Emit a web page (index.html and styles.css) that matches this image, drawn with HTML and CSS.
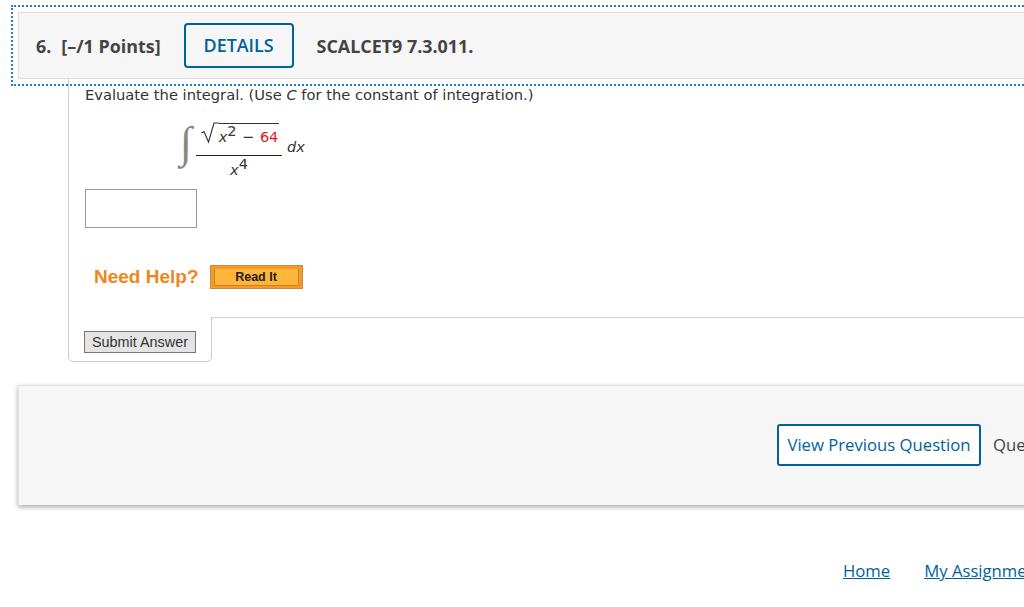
FILE: index.html
```html
<!DOCTYPE html>
<html lang="en">
<head>
  <meta charset="UTF-8" />
  <title>Question 6</title>
  <link rel="stylesheet" href="styles.css">
</head>
<body>
  <div class="page">
    <div class="question-head">
      <span class="q-number">6.</span>
      <span class="q-points">[–/1 Points]</span>
      <a class="details-btn">DETAILS</a>
      <span class="q-ref">SCALCET9 7.3.011.</span>
    </div>

    <div class="question-body">
      <div class="question-main">
        <p class="prompt">Evaluate the integral. (Use <i>C</i> for the constant of integration.)</p>

        <div class="math">
          <span class="integral">∫</span>
          <div class="fraction">
            <div class="numerator">
              <svg class="radical" width="18" height="22" viewBox="0 0 18 22"><path d="M0.5 11 L3 9.5 L7.5 20 L13 1 L18 1" fill="none" stroke="#333" stroke-width="1.1"/></svg>
              <span class="radicand"><i>x</i><sup>2</sup> <span class="minus">−</span> <span class="red">64</span></span>
            </div>
            <div class="denominator"><i>x</i><sup>4</sup></div>
          </div>
          <span class="dx"><i>dx</i></span>
        </div>

        <input class="answer" type="text">

        <div class="help">
          <span class="help-label">Need Help?</span>
          <span class="read-it"><span class="read-it-inner">Read It</span></span>
        </div>
      </div>

      <div class="question-foot">
        <div class="submit-cell"><button class="submit-btn">Submit Answer</button></div>
        <div class="foot-rest"></div>
      </div>
    </div>

    <div class="nav-panel">
      <a class="prev-btn">View Previous Question</a>
      <span class="nav-label">Question 6 of 8</span>
    </div>

    <div class="footer-links">
      <a>Home</a>
      <a>My Assignments</a>
    </div>
  </div>
</body>
</html>
```

FILE: styles.css
```css
html, body {
  margin: 0;
  height: 607px;
  overflow: hidden;
  background: white;
}
.page {
  width: 1400px;
  padding-top: 12px;
  font-family: "DejaVu Sans", sans-serif;
  color: #333;
}
.question-head {
  display: flex;
  align-items: center;
  box-sizing: border-box;
  height: 67px;
  margin-left: 18px;
  padding-left: 17px;
  background-color: #f6f6f6;
  border: 1px solid #ddd;
  outline: 2px dotted #1f7fc4;
  outline-offset: 5px;
  font-family: "Open Sans", sans-serif;
  font-size: 17.9px;
  font-weight: 700;
  color: #444;
}
.q-number {
  margin-right: 10px;
}
.details-btn {
  box-sizing: border-box;
  width: 110px;
  height: 45px;
  margin-left: 23px;
  margin-right: 23px;
  border: 2px solid #00629b;
  border-radius: 4px;
  color: #00629b;
  font-weight: 600;
  line-height: 41px;
  text-align: center;
}
.question-body {
  margin-left: 68px;
}
.question-main {
  padding: 7px 0 28px 16px;
  border-left: 1px solid #ccc;
}
.prompt {
  margin: 0;
  font-size: 14.7px;
  line-height: 18px;
}
.math {
  display: flex;
  align-items: center;
  height: 70px;
  margin-top: 14px;
  margin-left: 92px;
  font-size: 14.5px;
}
.integral {
  width: 16px;
  margin-top: -20px;
  margin-left: 3px;
  font-family: "Liberation Serif", serif;
  font-size: 44px;
  font-style: italic;
  line-height: 44px;
  color: #888;
}
.fraction {
  width: 86px;
  text-align: center;
}
.numerator {
  display: flex;
  justify-content: center;
  align-items: flex-end;
  box-sizing: border-box;
  height: 32px;
  padding-left: 2px;
  border-bottom: 1px solid #222;
}
.radical {
  margin-bottom: 11px;
}
.radicand {
  box-sizing: border-box;
  height: 22px;
  margin-bottom: 10px;
  padding-right: 1px;
  border-top: 1px solid #333;
  line-height: 26px;
  white-space: nowrap;
}
.minus {
  margin: 0 1px;
}
.red {
  color: #e8141c;
}
sup {
  font-size: 14.5px;
  line-height: 0;
  vertical-align: 6px;
}
.denominator {
  height: 27px;
  line-height: 29px;
}
.dx {
  margin-left: 5px;
  margin-top: -12px;
}
.answer {
  display: block;
  box-sizing: border-box;
  width: 112px;
  height: 39px;
  margin: 1px 0 0;
  border: 1px solid #999;
  background: white;
}
.help {
  display: flex;
  align-items: center;
  margin-top: 37px;
  margin-left: 9px;
}
.help-label {
  font-family: "Liberation Sans", sans-serif;
  font-size: 19px;
  font-weight: 700;
  color: #f0861a;
}
.read-it {
  box-sizing: border-box;
  width: 93px;
  height: 24px;
  margin-left: 11px;
  padding: 3px;
  background: #f39a2b;
  border: 1px solid #cf8a3f;
}
.read-it-inner {
  display: block;
  height: 16px;
  background: #ffb43a;
  border: 1px solid #c9822c;
  border-width: 0 1px 1px 1px;
  font-family: "Liberation Sans", sans-serif;
  font-size: 12.5px;
  font-weight: 700;
  line-height: 16px;
  text-align: center;
  color: #222;
}
.question-foot {
  display: flex;
}
.submit-cell {
  box-sizing: border-box;
  width: 144px;
  height: 45px;
  padding-top: 14px;
  padding-left: 15px;
  border: 1px solid #ccc;
  border-top: none;
  border-radius: 0 0 5px 5px;
}
.foot-rest {
  flex: 1;
  height: 20px;
  margin-left: -1px;
  border-top: 1px solid #d4d4d4;
  border-left: 1px solid #ccc;
  border-top-left-radius: 4px;
}
.submit-btn {
  display: block;
  box-sizing: border-box;
  width: 112px;
  height: 22px;
  padding: 0;
  background: #e4e4e4;
  border: 1px solid #777;
  font-family: "Liberation Sans", sans-serif;
  font-size: 14.4px;
  color: #333;
}
.nav-panel {
  display: flex;
  align-items: center;
  box-sizing: border-box;
  height: 120px;
  margin-top: 23px;
  margin-left: 18px;
  padding-left: 758px;
  padding-bottom: 2px;
  background-color: #f6f6f6;
  border-top: 1px solid #e2e2e2;
  border-left: 1px solid #e2e2e2;
  box-shadow: 0 2px 5px rgba(0, 0, 0, 0.35);
  font-family: "Open Sans", sans-serif;
  font-size: 16.7px;
}
.prev-btn {
  box-sizing: border-box;
  width: 204px;
  height: 42px;
  border: 2px solid #00629b;
  border-radius: 3px;
  background: white;
  color: #00629b;
  line-height: 38px;
  text-align: center;
}
.nav-label {
  margin-left: 12px;
  color: #444;
}
.footer-links {
  display: flex;
  gap: 34px;
  margin-top: 54px;
  padding-left: 843px;
  font-family: "Open Sans", sans-serif;
  font-size: 16.7px;
}
.footer-links a {
  color: #00629b;
  text-decoration: underline;
}
```
